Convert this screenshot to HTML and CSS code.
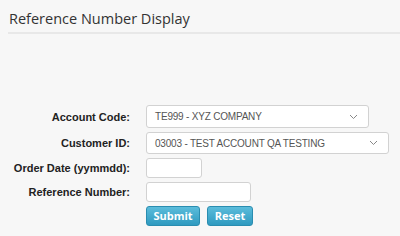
FILE: index.html
```html
<!DOCTYPE html>
<html>
<head>
<meta charset="utf-8">
<link rel="stylesheet" href="styles.css">
</head>
<body>
<div class="page">
  <h1 class="title">Reference Number Display</h1>
  <form class="form">
    <label class="label">Account Code:</label>
    <div class="ctl">
      <div class="select sel-account"><span class="sel-text">TE999 - XYZ COMPANY</span><svg class="chev" width="9" height="6" viewBox="0 0 9 6"><path d="M1 1 L4.5 4.5 L8 1" fill="none" stroke="#888" stroke-width="1"/></svg></div>
    </div>
    <label class="label">Customer ID:</label>
    <div class="ctl">
      <div class="select sel-customer"><span class="sel-text">03003 - TEST ACCOUNT QA TESTING</span><svg class="chev" width="9" height="6" viewBox="0 0 9 6"><path d="M1 1 L4.5 4.5 L8 1" fill="none" stroke="#888" stroke-width="1"/></svg></div>
    </div>
    <label class="label">Order Date (yymmdd):</label>
    <div class="ctl"><input class="input in-date" type="text"></div>
    <label class="label">Reference Number:</label>
    <div class="ctl"><input class="input in-ref" type="text"></div>
    <div></div>
    <div class="ctl buttons">
      <button type="button" class="btn btn-submit">Submit</button>
      <button type="button" class="btn btn-reset">Reset</button>
    </div>
  </form>
</div>
</body>
</html>
```
FILE: styles.css
```css
html, body {
  margin: 0;
  padding: 0;
  background: #f7f7f7;
}
.page {
  width: 400px;
  height: 236px;
  padding: 0 0 0 8px;
  box-sizing: border-box;
}
.title {
  margin: 0;
  padding: 10px 0 0 1px;
  height: 22px;
  font-family: "Open Sans", sans-serif;
  font-weight: 400;
  font-size: 14.5px;
  line-height: 18px;
  color: #333;
  border-bottom: 2px solid #e8e8e8;
}
.form {
  margin-top: 71px;
  display: grid;
  grid-template-columns: 122px auto;
  column-gap: 16px;
  row-gap: 4px;
  align-items: center;
}
.label {
  text-align: right;
  font-family: "Liberation Sans", Arial, sans-serif;
  font-weight: 700;
  font-size: 11px;
  color: #222;
}
.ctl {
  display: flex;
  align-items: center;
}
.select {
  display: flex;
  align-items: center;
  box-sizing: border-box;
  background: #fff;
  border: 1px solid #d2d2d2;
  border-radius: 3px;
  padding: 0 10px 0 8px;
  font-family: "Liberation Sans", Arial, sans-serif;
  font-size: 10px;
  color: #555;
}
.sel-account { width: 223px; height: 23px; }
.sel-customer { width: 243px; height: 22px; }
.sel-text { flex: 1; letter-spacing: -0.2px; }
.chev { flex: none; }
.input {
  box-sizing: border-box;
  margin: 0;
  background: #fff;
  border: 1px solid #d2d2d2;
  border-radius: 3px;
  height: 20px;
  padding: 0 4px;
}
.in-date { width: 56px; }
.in-ref { width: 105px; }
.buttons { gap: 7px; }
.btn {
  box-sizing: border-box;
  height: 20px;
  margin: 0;
  padding: 0;
  border: 1px solid #2a8db0;
  border-radius: 3px;
  background: linear-gradient(#5bbcdb, #2f9ac0);
  color: #fff;
  font-family: "Open Sans", sans-serif;
  font-weight: 700;
  font-size: 11px;
  line-height: 18px;
}
.btn-submit { width: 54px; }
.btn-reset { width: 46px; }
```
